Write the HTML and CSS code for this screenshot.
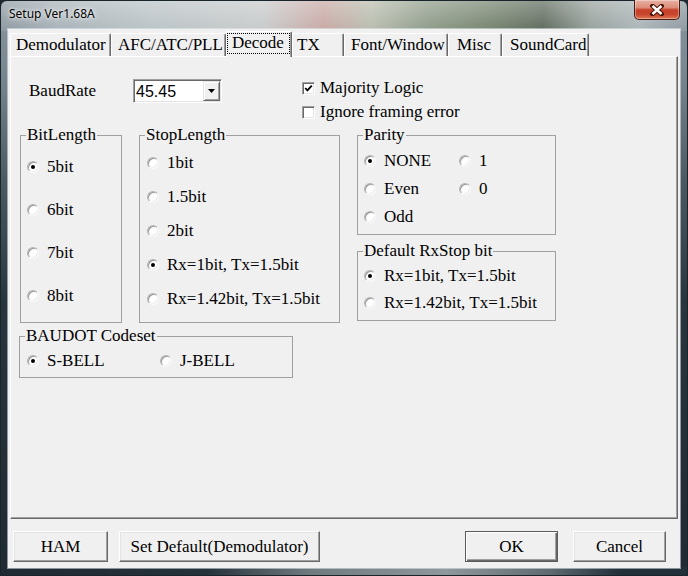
FILE: index.html
```html
<!DOCTYPE html>
<html>
<head>
<meta charset="utf-8">
<link rel="stylesheet" href="styles.css">
</head>
<body>
<div class="window">
  <div class="titlebar">
    <span class="title">Setup Ver1.68A</span>
    <div class="close">
      <svg width="14" height="12" viewBox="0 0 14 12"><path d="M2.5 2 L11.5 10 M11.5 2 L2.5 10" stroke="#4a1509" stroke-width="4.6" stroke-linecap="square" fill="none"/><path d="M2.5 2 L11.5 10 M11.5 2 L2.5 10" stroke="#ffffff" stroke-width="2.4" fill="none"/></svg>
    </div>
  </div>
  <div class="client">
    <div class="tabs">
      <div class="tab t1">Demodulator</div>
      <div class="tab t2">AFC/ATC/PLL</div>
      <div class="tab sel t3"><span class="focus">Decode</span></div>
      <div class="tab t4">TX</div>
      <div class="tab t5">Font/Window</div>
      <div class="tab t6">Misc</div>
      <div class="tab t7">SoundCard</div>
    </div>
    <div class="panel">
      <div class="toprow">
        <div class="baud-label">BaudRate</div>
        <div class="combo">
          <div class="combo-text">45.45</div>
          <div class="combo-btn"><svg width="7" height="4" viewBox="0 0 7 4"><polygon points="0,0 7,0 3.5,4" fill="#000"/></svg></div>
        </div>
        <div class="checks">
          <div class="check-row"><span class="cb"><svg width="11" height="11" viewBox="0 0 11 11"><path d="M2.2 5 L4.4 7.4 L8.8 2.6" stroke="#000" stroke-width="1.8" fill="none"/></svg></span>Majority Logic</div>
          <div class="check-row"><span class="cb"></span>Ignore framing error</div>
        </div>
      </div>
      <div class="groups">
        <div class="group bitlength">
          <div class="legend">BitLength</div>
          <div class="list bit-list">
            <div class="radio"><span class="rb on"></span>5bit</div>
            <div class="radio"><span class="rb"></span>6bit</div>
            <div class="radio"><span class="rb"></span>7bit</div>
            <div class="radio"><span class="rb"></span>8bit</div>
          </div>
        </div>
        <div class="group stoplength">
          <div class="legend">StopLength</div>
          <div class="list stop-list">
            <div class="radio"><span class="rb"></span>1bit</div>
            <div class="radio"><span class="rb"></span>1.5bit</div>
            <div class="radio"><span class="rb"></span>2bit</div>
            <div class="radio"><span class="rb on"></span>Rx=1bit, Tx=1.5bit</div>
            <div class="radio"><span class="rb"></span>Rx=1.42bit, Tx=1.5bit</div>
          </div>
        </div>
        <div class="col3">
          <div class="group parity">
            <div class="legend">Parity</div>
            <div class="parity-grid">
              <div class="radio"><span class="rb on"></span>NONE</div>
              <div class="radio"><span class="rb"></span>1</div>
              <div class="radio"><span class="rb"></span>Even</div>
              <div class="radio"><span class="rb"></span>0</div>
              <div class="radio"><span class="rb"></span>Odd</div>
            </div>
          </div>
          <div class="group rxstop">
            <div class="legend">Default RxStop bit</div>
            <div class="list rx-list">
              <div class="radio"><span class="rb on"></span>Rx=1bit, Tx=1.5bit</div>
              <div class="radio"><span class="rb"></span>Rx=1.42bit, Tx=1.5bit</div>
            </div>
          </div>
        </div>
      </div>
      <div class="group baudot">
        <div class="legend">BAUDOT Codeset</div>
        <div class="baudot-row">
          <div class="radio sbell"><span class="rb on"></span>S-BELL</div>
          <div class="radio"><span class="rb"></span>J-BELL</div>
        </div>
      </div>
    </div>
    <div class="footer">
      <div class="btn ham">HAM</div>
      <div class="btn setdef">Set Default(Demodulator)</div>
      <div class="btn ok def">OK</div>
      <div class="btn cancel">Cancel</div>
    </div>
  </div>
</div>
</body>
</html>
```

FILE: styles.css
```css
* { box-sizing: border-box; }
html, body { margin: 0; padding: 0; }
body {
  width: 688px;
  height: 576px;
  overflow: hidden;
  background: #1e2a33;
  font-family: "Liberation Serif", "Times New Roman", serif;
  font-size: 17px;
  color: #000;
}

.window {
  width: 688px;
  height: 576px;
  display: flex;
  flex-direction: column;
  padding: 0 7px 7px 7px;
  border: 1px solid #1a242b;
  border-radius: 7px 7px 3px 3px;
  background:
    linear-gradient(to bottom, rgba(255,255,255,0.28), rgba(255,255,255,0) 28px) 0 0 / 100% 30px no-repeat,
    linear-gradient(to right, #8f9ba3 0%, #aab4b9 8%, #bcc4c7 22%, #c9cccc 38%, #c9aaa7 47%, #b9beb0 54%, #929e8d 62%, #7a8773 71%, #636e61 79%, #9aa39f 86%, #adb6b9 93%, #909ba2 100%) 0 0 / 100% 30px no-repeat,
    linear-gradient(to right, #1f2a32 0%, #26323a 30%, #6f7a7f 45%, #8f989c 65%, #5e6a70 80%, #23303a 90%) 0 100% / 100% 8px no-repeat,
    linear-gradient(to bottom, #8b979f 0px, #77848d 80px, #4c5963 180px, #29353e 300px, #1f2a32 100%);
}

.titlebar {
  height: 28px;
  flex: none;
  display: flex;
  justify-content: space-between;
  align-items: flex-start;
}
.title {
  margin: 5px 0 0 1px;
  font-family: "Noto Sans", "Open Sans", sans-serif;
  font-size: 12px;
  line-height: 16px;
  color: #000;
  text-shadow: 0 0 6px rgba(255,255,255,0.95), 0 0 3px rgba(255,255,255,0.9);
}
.close {
  width: 46px;
  height: 20px;
  margin-top: -1px;
  border: 1px solid #4b1d14;
  border-top: none;
  border-radius: 0 0 5px 5px;
  background: linear-gradient(to bottom, #e9b2a4 0%, #dc8c78 40%, #c7412a 52%, #c8442b 75%, #dd7a55 100%);
  box-shadow: inset 0 0 0 1px rgba(255,255,255,0.35);
  display: flex;
  align-items: center;
  justify-content: center;
}

.client {
  flex: 1;
  background: #f0f0f0;
  box-shadow: 0 0 0 1px rgba(230,236,240,0.55);
  display: flex;
  flex-direction: column;
}

/* Tabs */
.tabs {
  height: 27px;
  flex: none;
  display: flex;
  align-items: flex-end;
  padding-left: 2px;
  position: relative;
  z-index: 1;
}
.tab {
  height: 23px;
  border: 1px solid;
  border-color: #ffffff #696969 transparent #ffffff;
  border-bottom: none;
  border-radius: 2px 2px 0 0;
  box-shadow: inset -1px 0 0 #a0a0a0;
  background: #f0f0f0;
  line-height: 21px;
  white-space: nowrap;
  overflow: hidden;
}
.tab.sel {
  height: 26px;
  margin-bottom: -1px;
}
.focus {
  display: block;
  margin-top: 1px;
  width: 63px;
  height: 21px;
  border: 1px dotted #000;
  padding-left: 4px;
  line-height: 17px;
}
.t1 { width: 101px; padding-left: 5px; }
.t2 { width: 115px; padding-left: 6px; }
.t3 { width: 66px; padding-left: 0; }
.t4 { width: 52px; padding-left: 4px; }
.t5 { width: 104px; padding-left: 6px; }
.t6 { width: 54px; padding-left: 8px; }
.t7 { width: 87px; padding-left: 7px; }

/* Panel */
.panel {
  width: 668px;
  height: 463px;
  flex: none;
  margin-left: 2px;
  border: 1px solid;
  border-color: #ffffff #696969 #696969 #ffffff;
  box-shadow: inset -1px -1px 0 #a0a0a0;
  padding: 19px 0 0 9px;
}

.toprow {
  height: 48px;
  display: flex;
  align-items: flex-start;
}
.baud-label {
  margin: 3px 0 0 9px;
  width: 104px;
  line-height: 24px;
}
.combo {
  margin-top: 3px;
  width: 89px;
  height: 24px;
  display: flex;
  padding: 1px;
  background: #fff;
  border: 1px solid;
  border-color: #a0a0a0 #ffffff #ffffff #a0a0a0;
  box-shadow: inset 1px 1px 0 #696969, inset -1px -1px 0 #e3e3e3;
}
.combo-text {
  flex: 1;
  padding-left: 1px;
  font-family: "Liberation Sans", Arial, sans-serif;
  font-size: 16px;
  line-height: 21px;
}
.combo-btn {
  width: 17px;
  height: 20px;
  background: #f0f0f0;
  border: 1px solid;
  border-color: #e3e3e3 #696969 #696969 #e3e3e3;
  box-shadow: inset 1px 1px 0 #fff, inset -1px -1px 0 #a0a0a0;
  display: flex;
  align-items: center;
  justify-content: center;
}
.checks { margin-left: 80px; }
.check-row {
  height: 24px;
  display: flex;
  align-items: center;
  line-height: 24px;
  white-space: nowrap;
}
.cb {
  width: 13px;
  height: 13px;
  margin-right: 5px;
  background: #fff;
  border: 1px solid;
  border-color: #a0a0a0 #ffffff #ffffff #a0a0a0;
  box-shadow: inset 1px 1px 0 #696969, inset -1px -1px 0 #e3e3e3;
  display: flex;
}

/* Groups */
.groups {
  margin-top: 2px;
  display: grid;
  grid-template-columns: 102px 201px 199px;
  column-gap: 17px;
  align-items: start;
}
.group {
  margin-top: 9px;
  border: 1px solid #a0a0a0;
}
.legend {
  display: block;
  width: fit-content;
  margin: -10px 0 0 5px;
  padding: 0 1px;
  background: #f0f0f0;
  line-height: 18px;
  height: 18px;
  white-space: nowrap;
}
.list {
  display: flex;
  flex-direction: column;
}
.radio {
  height: 20px;
  display: flex;
  align-items: center;
  line-height: 20px;
  white-space: nowrap;
}
.rb {
  position: relative;
  flex: none;
  width: 12px;
  height: 12px;
  margin-right: 8px;
  border-radius: 50%;
  background: #fff;
  border: 1px solid;
  border-color: #b4b4b4 #f8f8f8 #f8f8f8 #b4b4b4;
  box-shadow: inset 1px 1px 0 #9a9a9a, inset -1px -1px 0 #ececec;
}
.rb.on::after {
  content: "";
  position: absolute;
  left: 3px;
  top: 3px;
  width: 4px;
  height: 4px;
  border-radius: 50%;
  background: #000;
}

.bitlength { height: 188px; }
.bit-list { padding: 13px 0 0 6px; gap: 23px; }
.stoplength { height: 188px; }
.stop-list { padding: 9px 0 0 7px; gap: 14px; }

.col3 { display: flex; flex-direction: column; }
.parity { height: 100px; }
.parity-grid {
  display: grid;
  grid-template-columns: 95px auto;
  row-gap: 8px;
  padding: 7px 0 0 6px;
}
.rxstop { margin-top: 16px; height: 70px; }
.rx-list { padding: 6px 0 0 6px; gap: 7px; }

.baudot {
  margin-top: 13px;
  margin-left: -1px;
  width: 274px;
  height: 42px;
}
.baudot-row {
  display: flex;
  padding: 6px 0 0 7px;
}
.sbell { width: 133px; }

/* Footer */
.footer {
  flex: 1;
  display: flex;
  align-items: flex-start;
  padding: 12px 14px 0 5px;
}
.btn {
  height: 31px;
  background: #f0f0f0;
  border: 1px solid;
  border-color: #ffffff #696969 #696969 #ffffff;
  box-shadow: inset -1px -1px 0 #a0a0a0, inset 1px 1px 0 #e3e3e3;
  display: flex;
  align-items: center;
  justify-content: center;
  line-height: 20px;
  white-space: nowrap;
}
.btn.def {
  border: 1px solid #5a5a5a;
  box-shadow: inset 1px 1px 0 #ffffff, inset -1px -1px 0 #696969, inset -2px -2px 0 #a0a0a0;
}
.ham { width: 95px; }
.setdef { width: 201px; margin-left: 11px; }
.ok { width: 93px; margin-left: auto; }
.cancel { width: 93px; margin-left: 15px; }
```
